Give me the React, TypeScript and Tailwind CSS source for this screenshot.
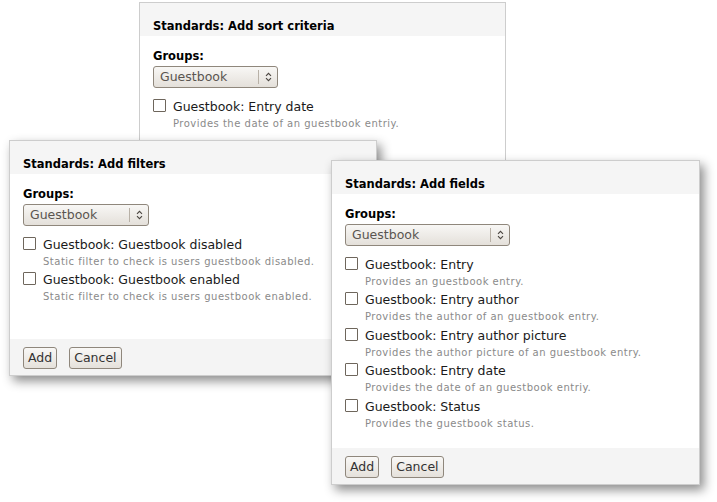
import React from 'react';

interface Item {
  label: string;
  desc: string;
}

interface WindowProps {
  title: string;
  items: Item[];
  selectWidth: string;
  className: string;
  bodyPad: string;
  footer?: boolean;
}

function UpDown() {
  return (
    <svg width="7" height="10" viewBox="0 0 7 10" fill="none" stroke="#4a4540" strokeWidth="1.1">
      <path d="M1 3.8 L3.5 1.3 L6 3.8" />
      <path d="M1 6.2 L3.5 8.7 L6 6.2" />
    </svg>
  );
}

function Select({ width }: { width: string }) {
  return (
    <div
      className={`${width} h-[22px] flex items-stretch rounded-[3px] border border-[#8f877c] bg-gradient-to-b from-[#f8f7f5] to-[#e4e0da]`}
    >
      <span className="flex-1 pl-[6px] leading-[20px] text-[12.5px] text-[#5a5550]">Guestbook</span>
      <span className="w-[19px] flex items-center justify-center border-l border-[#b8b1a7] my-[3px]">
        <UpDown />
      </span>
    </div>
  );
}

function Button({ children }: { children: React.ReactNode }) {
  return (
    <button className="h-[22px] px-[4px] rounded-[3px] border border-[#8f877c] bg-gradient-to-b from-[#f9f8f6] to-[#e5e1db] text-[12.5px] leading-[20px] text-[#333]">
      {children}
    </button>
  );
}

function Dialog({ title, items, selectWidth, className, bodyPad, footer = true }: WindowProps) {
  return (
    <div className={`absolute flex flex-col bg-white border border-[#cdcdcd] ${className}`}>
      {/* Header */}
      <div className="h-[33px] bg-[#f5f5f5] px-[13px] pt-[15px]">
        <h3 className="text-[11.5px] leading-[16px] font-bold text-black">{title}</h3>
      </div>

      {/* Body */}
      <div className={`px-[13px] pt-[12px] ${bodyPad}`}>
        <div className="text-[11.5px] leading-[16px] font-bold text-black">Groups:</div>
        <div className="mt-[2px]">
          <Select width={selectWidth} />
        </div>
        <div className="mt-[10px] flex flex-col gap-[2.4px]">
          {items.map((item) => (
            <div key={item.label}>
              <div className="flex items-start">
                <span className="mt-[1px] w-[13px] h-[13px] border border-[#6e665c] rounded-[1px] bg-white shrink-0" />
                <span className="ml-[7px] text-[12.5px] leading-[17px] text-[#1a1a1a]">{item.label}</span>
              </div>
              <div className="mt-[2px] ml-[20px] text-[10px] leading-[14px] tracking-[0.5px] text-[#8a8a8a]">
                {item.desc}
              </div>
            </div>
          ))}
        </div>
      </div>

      {/* Footer */}
      {footer && (
        <div className="mt-auto h-[36px] bg-[#f4f4f4] px-[13px] pt-[8px] flex gap-[12px] items-start">
          <Button>Add</Button>
          <Button>Cancel</Button>
        </div>
      )}
    </div>
  );
}

export default function App() {
  return (
    <div className="relative w-[717px] h-[502px] bg-white overflow-hidden" style={{ fontFamily: '"DejaVu Sans", Verdana, sans-serif' }}>
      <Dialog
        title="Standards: Add sort criteria"
        items={[{ label: 'Guestbook: Entry date', desc: 'Provides the date of an guestbook entriy.' }]}
        selectWidth="w-[125px]"
        className="left-[139px] top-[2px] w-[367px] h-[200px] z-[1]"
        bodyPad="pb-[20px]"
        footer={false}
      />
      <Dialog
        title="Standards: Add filters"
        items={[
          { label: 'Guestbook: Guestbook disabled', desc: 'Static filter to check is users guestbook disabled.' },
          { label: 'Guestbook: Guestbook enabled', desc: 'Static filter to check is users guestbook enabled.' },
        ]}
        selectWidth="w-[126px]"
        className="left-[9px] top-[140px] w-[368px] h-[236px] z-[2] shadow-[4px_5px_10px_rgba(0,0,0,0.45)]"
        bodyPad="pb-[20px]"
      />
      <Dialog
        title="Standards: Add fields"
        items={[
          { label: 'Guestbook: Entry', desc: 'Provides an guestbook entry.' },
          { label: 'Guestbook: Entry author', desc: 'Provides the author of an guestbook entry.' },
          { label: 'Guestbook: Entry author picture', desc: 'Provides the author picture of an guestbook entry.' },
          { label: 'Guestbook: Entry date', desc: 'Provides the date of an guestbook entriy.' },
          { label: 'Guestbook: Status', desc: 'Provides the guestbook status.' },
        ]}
        selectWidth="w-[165px]"
        className="left-[331px] top-[160px] w-[369px] h-[325px] z-[3] shadow-[4px_5px_10px_rgba(0,0,0,0.45)]"
        bodyPad="pb-[10px]"
      />
    </div>
  );
}
